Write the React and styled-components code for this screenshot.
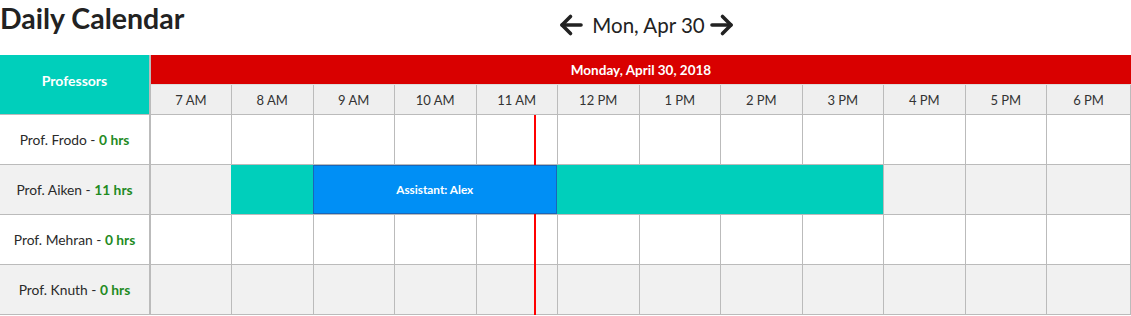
import React from "react";
import styled, { createGlobalStyle } from "styled-components";

const HOURS = ["7 AM", "8 AM", "9 AM", "10 AM", "11 AM", "12 PM", "1 PM", "2 PM", "3 PM", "4 PM", "5 PM", "6 PM"];

const PROFESSORS = [
  { name: "Prof. Frodo", hrs: 0, blocks: [] },
  {
    name: "Prof. Aiken",
    hrs: 11,
    blocks: [
      { from: 1, to: 9, kind: "shift" },
      { from: 2, to: 5, kind: "assistant", label: "Assistant: Alex" },
    ],
  },
  { name: "Prof. Mehran", hrs: 0, blocks: [] },
  { name: "Prof. Knuth", hrs: 0, blocks: [] },
];

// current time, in hours after 7 AM
const NOW = 4.7;

const GlobalStyle = createGlobalStyle`
  body {
    margin: 0;
    background: #fff;
    font-family: Lato, "Open Sans", sans-serif;
    color: #222;
  }
`;

const ArrowIcon = ({ flip }) => (
  <svg width="26" height="26" viewBox="0 0 26 26" style={flip ? { transform: "scaleX(-1)" } : undefined}>
    <g fill="none" stroke="#222" strokeWidth="3.6" strokeLinecap="round" strokeLinejoin="round">
      <path d="M23 13H4" />
      <path d="M12.5 4.5L4 13l8.5 8.5" />
    </g>
  </svg>
);

const App = () => {
  return (
    <>
      <GlobalStyle />
      <Page>
        <Header>
          <Title>Daily Calendar</Title>
          <DateNav>
            <NavButton aria-label="previous day" $gap={8}>
              <ArrowIcon />
            </NavButton>
            <DateLabel>Mon, Apr 30</DateLabel>
            <NavButton aria-label="next day" $gap={4}>
              <ArrowIcon flip />
            </NavButton>
          </DateNav>
        </Header>

        <Calendar>
          <HeadGrid>
            <Corner>Professors</Corner>
            <DayBar>Monday, April 30, 2018</DayBar>
            {HOURS.map((h) => (
              <HourCell key={h}>{h}</HourCell>
            ))}
          </HeadGrid>

          <Body>
            {PROFESSORS.map((p, i) => (
              <Row key={p.name} $shade={i % 2 === 1}>
                <NameCell>
                  {p.name} -&nbsp;<Hours>{p.hrs} hrs</Hours>
                </NameCell>
                {HOURS.map((h, c) => (
                  <Slot key={h} $col={c + 2} />
                ))}
                {p.blocks.map((b) => (
                  <Block key={b.kind} $from={b.from + 2} $to={b.to + 2} $kind={b.kind}>
                    {b.label}
                  </Block>
                ))}
              </Row>
            ))}
            <NowLine style={{ left: `calc(151px + 81.5px * ${NOW})` }} />
          </Body>
        </Calendar>
      </Page>
    </>
  );
};

export default App;

const Page = styled.div`
  width: 1131px;
  overflow: hidden;
`;

const Header = styled.header`
  display: flex;
  align-items: flex-start;
  height: 55px;
`;

const Title = styled.h1`
  margin: 0;
  padding-top: 1px;
  font-size: 28.5px;
  font-weight: 700;
  color: #222;
  line-height: 34px;
`;

const DateNav = styled.div`
  display: flex;
  align-items: center;
  margin-left: 374px;
  margin-top: 12px;
`;

const NavButton = styled.span`
  display: flex;
  cursor: pointer;
  margin: 0 ${(p) => p.$gap}px;
  &:first-child {
    margin-left: 0;
  }
`;

const DateLabel = styled.span`
  font-size: 20.5px;
  color: #222;
  line-height: 24px;
`;

const GRID = "151px 81px repeat(10, 81.5px) 1fr";

const Calendar = styled.div`
  display: flex;
  flex-direction: column;
`;

const HeadGrid = styled.div`
  display: grid;
  grid-template-columns: ${GRID};
  grid-template-rows: 30px 30px;
`;

const Corner = styled.div`
  grid-row: 1 / 3;
  display: flex;
  align-items: center;
  justify-content: center;
  background: #00cfbb;
  color: #fff;
  font-size: 14px;
  font-weight: 700;
  border-right: 2px solid #bbb;
  border-bottom: 1px solid #bbb;
  padding-bottom: 8px;
  box-sizing: border-box;
`;

const DayBar = styled.div`
  grid-column: 2 / -1;
  display: flex;
  align-items: center;
  justify-content: center;
  background: #d90000;
  color: #fff;
  font-size: 13.5px;
  font-weight: 700;
  border-bottom: 1px solid #ddd;
`;

const HourCell = styled.div`
  display: flex;
  align-items: center;
  justify-content: center;
  background: #efefef;
  color: #333;
  font-size: 13px;
  border-right: 1px solid #bbb;
  border-bottom: 1px solid #bbb;
`;

const Body = styled.div`
  position: relative;
`;

const Row = styled.div`
  display: grid;
  grid-template-columns: ${GRID};
  grid-template-rows: 49px;
  background: ${(p) => (p.$shade ? "#f1f1f1" : "#fff")};
  border-bottom: 1px solid #bbb;
`;

const NameCell = styled.div`
  grid-column: 1;
  grid-row: 1;
  display: flex;
  align-items: center;
  justify-content: center;
  font-size: 13.8px;
  color: #2a2a2a;
  border-right: 2px solid #bbb;
`;

const Hours = styled.b`
  color: #1f8b1f;
  font-weight: 700;
`;

const Slot = styled.div`
  grid-column: ${(p) => p.$col};
  grid-row: 1;
  border-right: 1px solid #bbb;
`;

const Block = styled.div`
  grid-column: ${(p) => p.$from} / ${(p) => p.$to};
  grid-row: 1;
  z-index: ${(p) => (p.$kind === "assistant" ? 3 : 2)};
  display: flex;
  align-items: center;
  justify-content: center;
  margin: 0 1px 0 -1px;
  background: ${(p) => (p.$kind === "assistant" ? "#008ff5" : "#00cfbb")};
  border: ${(p) => (p.$kind === "assistant" ? "1px solid #1a66b8" : "none")};
  color: #fff;
  font-size: 11.8px;
  font-weight: 700;
`;

const NowLine = styled.div`
  position: absolute;
  top: 0;
  bottom: 0;
  width: 2px;
  background: #ff0000;
  z-index: 1;
`;
